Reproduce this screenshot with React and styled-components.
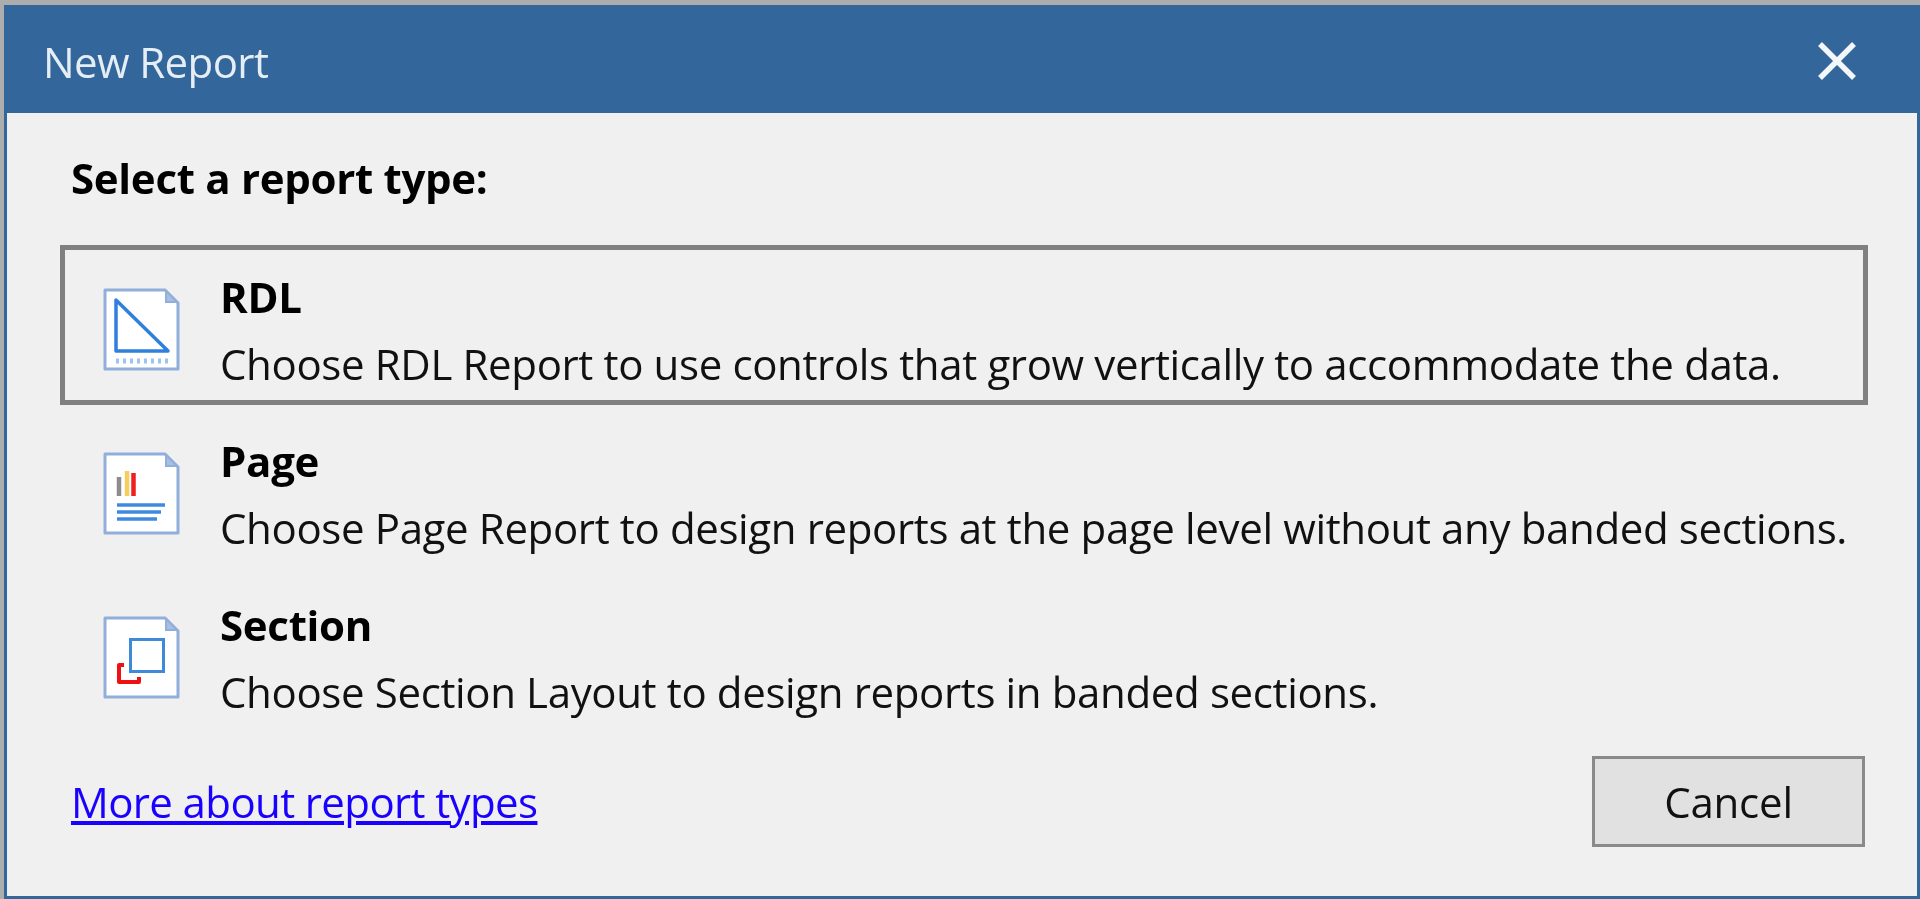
import React from 'react'
import styled, { createGlobalStyle } from 'styled-components'

const GlobalStyle = createGlobalStyle`
  html, body {
    margin: 0;
    padding: 0;
    background: #adadad;
    overflow: hidden;
  }
  body {
    font-family: "Open Sans", "Liberation Sans", sans-serif;
  }
`

const Frame = styled.div`
  height: 899px;
  box-sizing: border-box;
  padding: 5px 0 0 4px;
  background: #adadad;
`

// the reference is an upscaled capture, everything in it is slightly soft
const Window = styled.div`
  height: 100%;
  box-sizing: border-box;
  display: flex;
  flex-direction: column;
  background: #f0f0f0;
  border: solid #33669a;
  border-width: 0 3px 3px 3px;
  filter: blur(0.6px);
`

const TitleBar = styled.div`
  height: 108px;
  flex: none;
  box-sizing: border-box;
  display: flex;
  align-items: center;
  justify-content: space-between;
  padding: 4px 61px 0 36px;
  background: #33669a;
`

const Title = styled.div`
  color: #e6eef5;
  font-size: 42px;
  letter-spacing: -0.6px;
`

const CloseButton = styled.button`
  padding: 0;
  border: 0;
  background: none;
  display: flex;
  width: 38px;
  height: 38px;
`

const Body = styled.div`
  flex: 1;
  display: flex;
  flex-direction: column;
  padding: 42px 49px 0 53px;
`

const Heading = styled.div`
  margin: 0 0 44px 11px;
  height: 46px;
  line-height: 46px;
  font-size: 42px;
  font-weight: 700;
  color: #000;
  letter-spacing: -0.3px;
`

const Rows = styled.div`
  display: flex;
  flex-direction: column;
  gap: 4px;
`

const Row = styled.div`
  height: 160px;
  box-sizing: border-box;
  display: flex;
  align-items: center;
  gap: 40px;
  padding: 8px 0 0 38px;
  border: 5px solid ${p => (p.$selected ? '#808080' : 'transparent')};
`

const RowText = styled.div`
  display: flex;
  flex-direction: column;
  gap: 17px;
  min-width: 0;
  padding-top: 3px;
`

const RowTitle = styled.div`
  height: 50px;
  line-height: 50px;
  font-size: 42px;
  font-weight: 700;
  color: #000;
  letter-spacing: -0.3px;
`

const RowDesc = styled.div`
  height: 50px;
  line-height: 50px;
  font-size: 42px;
  color: #111;
  white-space: nowrap;
  letter-spacing: -0.36px;
`

const Footer = styled.div`
  display: flex;
  align-items: center;
  justify-content: space-between;
  margin-top: 23px;
  padding: 0 3px 0 11px;
`

const MoreLink = styled.a`
  font-size: 42px;
  color: #1a00ff;
  text-decoration: underline;
  letter-spacing: -0.62px;
`

const CancelButton = styled.button`
  width: 273px;
  height: 91px;
  box-sizing: border-box;
  border: 3px solid #8a8a8a;
  background: #e1e1e1;
  color: #111;
  font-family: inherit;
  font-size: 42px;
  letter-spacing: -0.2px;
`

const Sheet = ({ children }) => (
  <svg width="77" height="83" viewBox="0 0 77 83" fill="none">
    <path d="M2 2H62L75 15V81H2Z" fill="#fff" stroke="#92aeda" strokeWidth="3" strokeLinejoin="round" />
    <path d="M63 3V14H74Z" fill="#a9bfe2" stroke="#92aeda" strokeWidth="2" />
    {children}
  </svg>
)

const RdlIcon = () => (
  <Sheet>
    <path d="M13 12V63H65Z" fill="none" stroke="#2f80dc" strokeWidth="3.5" strokeLinejoin="round" />
    <path d="M13 73H66" stroke="#9cc4ee" strokeWidth="5" strokeDasharray="3 4" />
  </Sheet>
)

const PageIcon = () => (
  <Sheet>
    <path d="M16 25V44" stroke="#8c8c8c" strokeWidth="4.5" />
    <path d="M24 19V44" stroke="#f5cf5e" strokeWidth="4.5" />
    <path d="M30.5 21V44" stroke="#ee2020" strokeWidth="4.5" />
    <path d="M14 53H62M14 60H58M14 67H54" stroke="#3f8ade" strokeWidth="3.5" />
  </Sheet>
)

const SectionIcon = () => (
  <Sheet>
    <rect x="27.5" y="23.5" width="33" height="32" stroke="#3e8ad8" strokeWidth="3" fill="#fff" />
    <path d="M21 49H16V66H36V61" stroke="#f01010" strokeWidth="4" fill="none" strokeLinejoin="round" />
  </Sheet>
)

const reportTypes = [
  { name: 'RDL', desc: 'Choose RDL Report to use controls that grow vertically to accommodate the data.', Icon: RdlIcon, selected: true },
  { name: 'Page', desc: 'Choose Page Report to design reports at the page level without any banded sections.', Icon: PageIcon },
  { name: 'Section', desc: 'Choose Section Layout to design reports in banded sections.', Icon: SectionIcon },
]

export default function App() {
  return (
    <>
      <GlobalStyle />
      <Frame>
        <Window>
          <TitleBar>
            <Title>New Report</Title>
            <CloseButton aria-label="Close">
              <svg width="38" height="38" viewBox="0 0 38 38">
                <path d="M2 2L36 36M36 2L2 36" stroke="#f4f7fa" strokeWidth="5.5" />
              </svg>
            </CloseButton>
          </TitleBar>
          <Body>
            <Heading>Select a report type:</Heading>
            <Rows>
              {reportTypes.map(({ name, desc, Icon, selected }) => (
                <Row key={name} $selected={selected}>
                  <Icon />
                  <RowText>
                    <RowTitle>{name}</RowTitle>
                    <RowDesc>{desc}</RowDesc>
                  </RowText>
                </Row>
              ))}
            </Rows>
            <Footer>
              <MoreLink href="#">More about report types</MoreLink>
              <CancelButton>Cancel</CancelButton>
            </Footer>
          </Body>
        </Window>
      </Frame>
    </>
  )
}
